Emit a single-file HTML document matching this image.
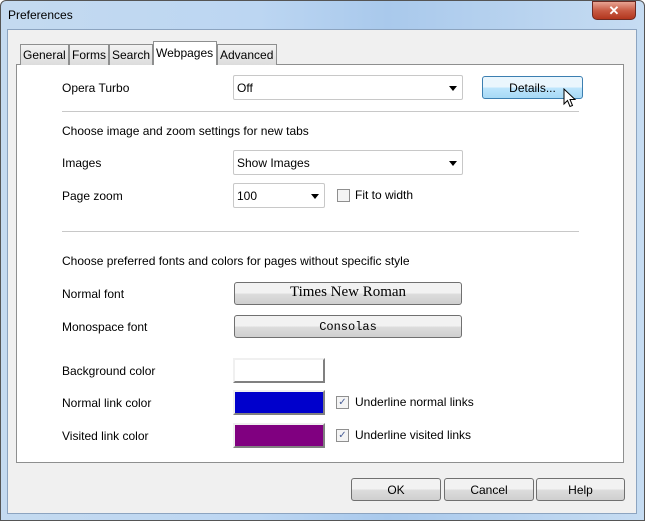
<!DOCTYPE html>
<html><head><style>
*{margin:0;padding:0;box-sizing:border-box}
body{width:645px;height:521px;overflow:hidden;font-family:"Liberation Sans",sans-serif;font-size:12px;color:#000;background:#fff}
.a{position:absolute}
.win{left:0;top:0;width:645px;height:521px;border:1px solid #555;border-radius:6px 6px 0 0;background:linear-gradient(90deg,#c4daf0,#bcd6f2 40%,#a9c9ec 60%,#c6dcf2);}
.client{left:7px;top:29px;width:630px;height:485px;background:#f0f0f0;border:1px solid #8ca4c0}
.panel{left:16px;top:64px;width:608px;height:399px;background:#fff;border:1px solid #8e8f8f}
.tab{top:44px;height:21px;background:linear-gradient(#f3f3f3,#dcdcdc);border:1px solid #8e8f8f;border-bottom:none;padding:3px 2px 0;font-size:12px}
.sel{top:41px;height:24px;background:#fff;padding-top:4px;z-index:2}
.lbl{font-size:12px}
.dd{height:25px;border:1px solid #c8c8c8;background:#fff;padding:5px 3px;border-radius:2px}
.dd:after{content:"";position:absolute;right:5px;top:10px;border:4px solid transparent;border-top:5px solid #000}
.btn{border:1px solid #707070;border-radius:3px;background:linear-gradient(#f2f2f2 50%,#dddddd 50%,#cfcfcf);text-align:center}
.cb{width:13px;height:13px;border:1px solid #8f8f8f;background:#f4f4f4}
.hr{height:1px;background:#c8c8c8}
.sw{width:92px;height:25px;border:2px solid;border-color:#f0f0f0 #808080 #808080 #f0f0f0}
</style></head><body>
<div class="a win"></div>
<div class="a" style="left:8px;top:8px;font-size:12px">Preferences</div>
<div class="a" style="left:592px;top:1px;width:44px;height:19px;border:1px solid #6d2a22;border-radius:0 0 5px 5px;background:linear-gradient(#e8a493,#c85b44 50%,#b2361e);color:#fff;text-align:center;font-weight:bold;font-size:13px;line-height:17px">✕</div>
<div class="a client"></div>
<div class="a panel"></div>
<div class="a tab" style="left:20px;width:49px">General</div>
<div class="a tab" style="left:69px;width:40px">Forms</div>
<div class="a tab" style="left:109px;width:44px">Search</div>
<div class="a tab sel" style="left:153px;width:64px">Webpages</div>
<div class="a tab" style="left:217px;width:60px">Advanced</div>

<div class="a lbl" style="left:62px;top:81px">Opera Turbo</div>
<div class="a dd" style="left:233px;top:75px;width:230px">Off</div>
<div class="a btn" style="left:482px;top:76px;width:101px;height:23px;border-color:#3c7fb1;background:linear-gradient(#eaf6fd 50%,#bee6fd 50%,#a7d9f5);padding-top:4px">Details...</div>
<svg class="a" style="left:563px;top:88px" width="14" height="22" viewBox="0 0 14 22"><path d="M1 1 L1 16 L4.5 12.5 L7 18.5 L9.5 17.5 L7 11.5 L12 11.5 Z" fill="#fff" stroke="#000" stroke-width="1"/></svg>
<div class="a hr" style="left:62px;top:111px;width:517px"></div>
<div class="a lbl" style="left:62px;top:124px">Choose image and zoom settings for new tabs</div>
<div class="a lbl" style="left:62px;top:156px">Images</div>
<div class="a dd" style="left:233px;top:150px;width:230px">Show Images</div>
<div class="a lbl" style="left:62px;top:189px">Page zoom</div>
<div class="a dd" style="left:233px;top:183px;width:92px">100</div>
<div class="a cb" style="left:337px;top:189px"></div>
<div class="a lbl" style="left:355px;top:188px">Fit to width</div>
<div class="a hr" style="left:62px;top:231px;width:517px"></div>
<div class="a lbl" style="left:62px;top:254px">Choose preferred fonts and colors for pages without specific style</div>
<div class="a lbl" style="left:62px;top:287px">Normal font</div>
<div class="a btn" style="left:234px;top:282px;width:228px;height:23px;font-family:'Liberation Serif',serif;font-size:15px;padding-top:1px">Times New Roman</div>
<div class="a lbl" style="left:62px;top:320px">Monospace font</div>
<div class="a btn" style="left:234px;top:315px;width:228px;height:23px;font-family:'Liberation Mono',monospace;font-size:12px;padding-top:4px">Consolas</div>
<div class="a lbl" style="left:62px;top:364px">Background color</div>
<div class="a sw" style="left:233px;top:358px;background:#fff"></div>
<div class="a lbl" style="left:62px;top:396px">Normal link color</div>
<div class="a sw" style="left:233px;top:390px;background:#0000cc"></div>
<div class="a cb" style="left:336px;top:396px;font-size:10px;color:#4a5f97;line-height:11px;text-align:center">✓</div>
<div class="a lbl" style="left:355px;top:395px">Underline normal links</div>
<div class="a lbl" style="left:62px;top:429px">Visited link color</div>
<div class="a sw" style="left:233px;top:423px;background:#800080"></div>
<div class="a cb" style="left:336px;top:429px;font-size:10px;color:#4a5f97;line-height:11px;text-align:center">✓</div>
<div class="a lbl" style="left:355px;top:428px">Underline visited links</div>

<div class="a btn" style="left:351px;top:478px;width:90px;height:23px;padding-top:4px">OK</div>
<div class="a btn" style="left:444px;top:478px;width:90px;height:23px;padding-top:4px">Cancel</div>
<div class="a btn" style="left:536px;top:478px;width:89px;height:23px;padding-top:4px">Help</div>
</body></html>
